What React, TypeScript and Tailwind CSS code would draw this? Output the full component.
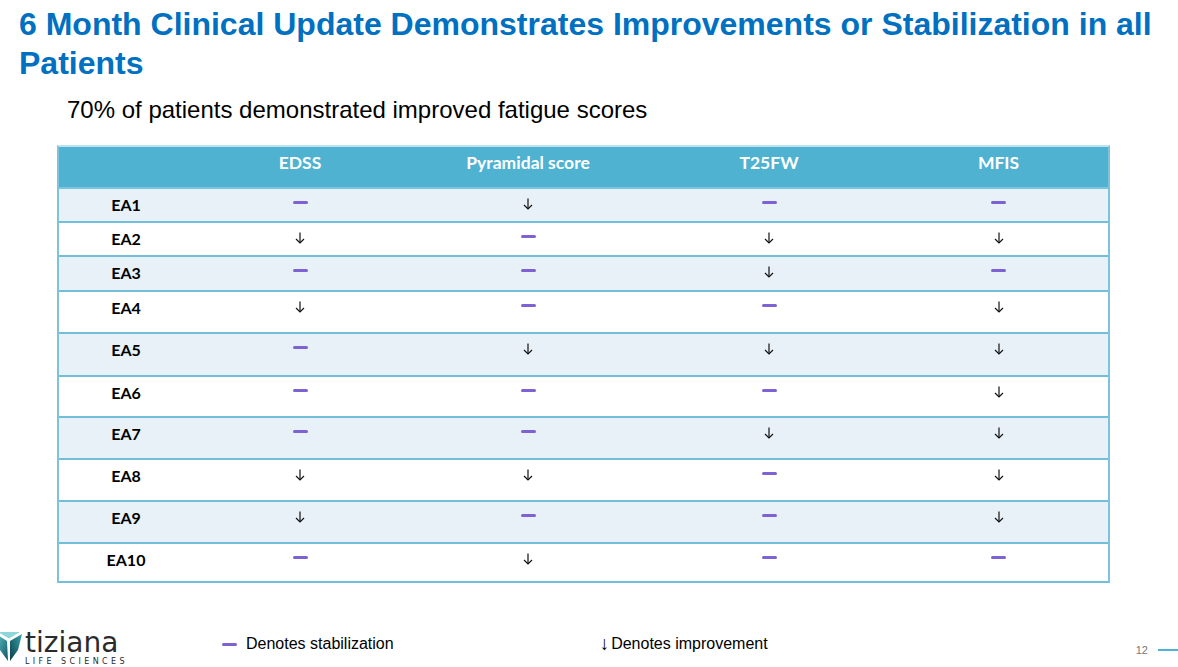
import React from 'react';

type Mark = 'd' | 'a';

const rows: { id: string; h: string; shade: boolean; marks: Mark[] }[] = [
  { id: 'EA1', h: 'h-[34px]', shade: true, marks: ['d', 'a', 'd', 'd'] },
  { id: 'EA2', h: 'h-[34px]', shade: false, marks: ['a', 'd', 'a', 'a'] },
  { id: 'EA3', h: 'h-[35px]', shade: true, marks: ['d', 'd', 'a', 'd'] },
  { id: 'EA4', h: 'h-[42px]', shade: false, marks: ['a', 'd', 'd', 'a'] },
  { id: 'EA5', h: 'h-[43px]', shade: true, marks: ['d', 'a', 'a', 'a'] },
  { id: 'EA6', h: 'h-[41px]', shade: false, marks: ['d', 'd', 'd', 'a'] },
  { id: 'EA7', h: 'h-[42px]', shade: true, marks: ['d', 'd', 'a', 'a'] },
  { id: 'EA8', h: 'h-[42px]', shade: false, marks: ['a', 'a', 'd', 'a'] },
  { id: 'EA9', h: 'h-[42px]', shade: true, marks: ['a', 'd', 'd', 'a'] },
  { id: 'EA10', h: 'h-[39px]', shade: false, marks: ['d', 'a', 'd', 'd'] },
];

const headers = ['', 'EDSS', 'Pyramidal score', 'T25FW', 'MFIS'];

const Dash = () => <div className="mt-[12px] h-[3px] w-[15px] rounded-full bg-[#7d62d3]" />;

const Arrow = () => (
  <svg width="10" height="12" viewBox="0 0 10 12" className="mt-[9px]" fill="none" stroke="#111" strokeWidth="1.2">
    <path d="M5 0.5 V11" />
    <path d="M1 7 L5 11 L9 7" />
  </svg>
);

const Logo = () => (
  <div className="flex items-start">
    <svg width="26" height="32" viewBox="0 0 26 32" className="-ml-[4px] mt-[1px]">
      <defs>
        <linearGradient id="lg1" x1="0" y1="0" x2="1" y2="1">
          <stop offset="0" stopColor="#5fc2c9" />
          <stop offset="1" stopColor="#0d5560" />
        </linearGradient>
        <linearGradient id="lg2" x1="1" y1="0" x2="0" y2="1">
          <stop offset="0" stopColor="#3aa3ad" />
          <stop offset="1" stopColor="#083f48" />
        </linearGradient>
      </defs>
      <path d="M0 2 L11 9 L12 29 L4 18 Z" fill="url(#lg1)" />
      <path d="M26 2 L14 9 L14 29 L22 18 Z" fill="url(#lg2)" />
      <path d="M2 0 L24 0 L13 6.5 Z" fill="#8fd6dc" />
    </svg>
    <div className="ml-[3px] flex flex-col">
      <span className="font-['DejaVu_Sans',sans-serif] text-[28px] leading-[24px] tracking-[0px] text-[#2b2b2b]">tiziana</span>
      <span className="mt-[2px] font-['DejaVu_Sans',sans-serif] text-[8px] leading-[10px] tracking-[3.4px] text-[#2b2b2b]">LIFE SCIENCES</span>
    </div>
  </div>
);

export default function App() {
  return (
    <div className="relative h-[667px] w-[1178px] overflow-hidden bg-white font-['Liberation_Sans',Arial,sans-serif]">
      <h1 className="pl-[19px] pt-[5px] text-[32px] font-bold leading-[39px] text-[#0070c0]">
        6 Month Clinical Update Demonstrates Improvements or Stabilization in all Patients
      </h1>
      <p className="mt-[13px] pl-[67px] text-[24px] leading-[28px] text-black">
        70% of patients demonstrated improved fatigue scores
      </p>

      <div className="ml-[57px] mt-[21px] w-[1053px] border-x-2 border-t-2 border-[#7cc4dc] border-t-[#bfe3ee] font-['Lato',sans-serif] text-[16px]">
        <div className="grid h-[42px] grid-cols-[134px_214px_242px_240px_219px] border-b-2 border-[#7cc4dc] bg-[#4fb2d1]">
          {headers.map((h, i) => (
            <div key={i} className="pt-[6px] text-center text-[17.5px] font-bold leading-[20px] text-white">
              {h}
            </div>
          ))}
        </div>
        {rows.map((r) => (
          <div
            key={r.id}
            className={`grid grid-cols-[134px_214px_242px_240px_219px] border-b-2 border-[#72bfda] ${r.h} ${r.shade ? 'bg-[#e8f1f8]' : 'bg-white'}`}
          >
            <div className="pt-[6px] text-center font-bold leading-[20px] text-black">{r.id}</div>
            {r.marks.map((m, i) => (
              <div key={i} className="flex justify-center">
                {m === 'd' ? <Dash /> : <Arrow />}
              </div>
            ))}
          </div>
        ))}
      </div>

      <div className="mt-[48px] flex items-start">
        <Logo />
        <div className="ml-[94px] mt-[3px] flex items-center">
          <div className="h-[3px] w-[15px] rounded-full bg-[#7d62d3]" />
          <span className="ml-[9px] text-[16px] leading-[20px] text-black">Denotes stabilization</span>
        </div>
        <div className="ml-[206px] mt-[3px] flex items-center text-[16px] leading-[20px] text-black">
          <span className="text-[19px]">↓</span>
          <span className="ml-[2px]">Denotes improvement</span>
        </div>
        <div className="ml-auto mt-[13px] flex items-center">
          <span className="text-[11px] leading-[12px] text-[#777]">12</span>
          <div className="ml-[10px] h-[2px] w-[20px] bg-[#4fb2d1]" />
        </div>
      </div>
    </div>
  );
}
